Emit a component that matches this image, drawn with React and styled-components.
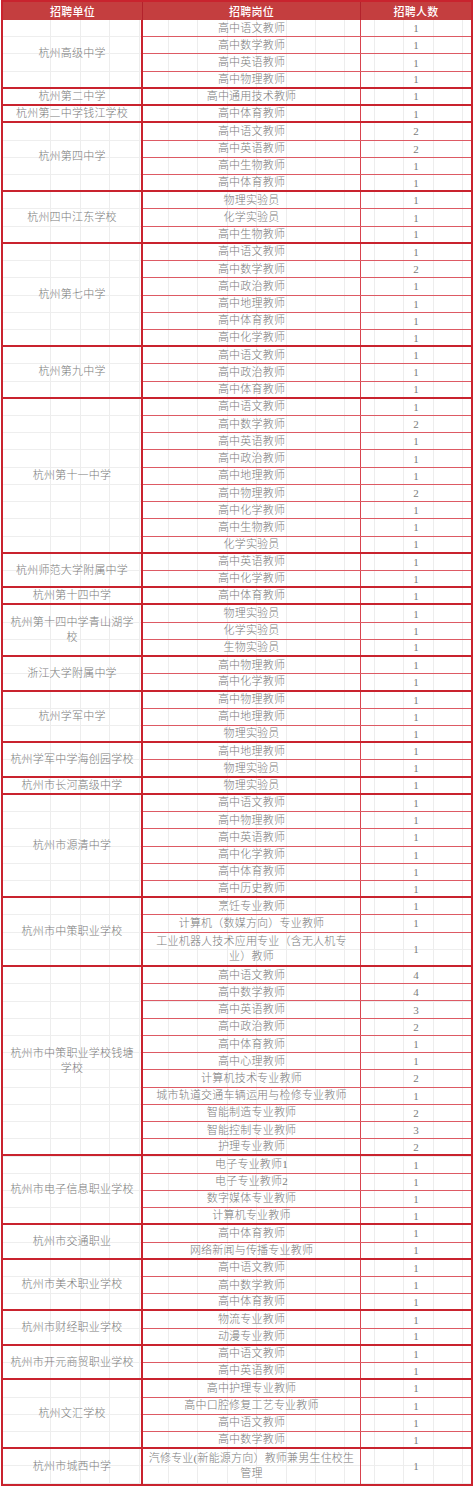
import React from "react";
import styled, { createGlobalStyle } from "styled-components";

const ROW = 17.22;

const GlobalStyle = createGlobalStyle`
  html, body {
    margin: 0;
    padding: 0;
    background: #ffffff;
  }
`;

const Table = styled.div`
  width: 472px;
  margin-left: 1px;
  box-sizing: border-box;
  border: 2px solid #c9232e;
  font-family: "Liberation Serif", "Noto Sans CJK SC", serif;
  font-size: 11px;
  font-weight: 300;
  color: #7c7c7c;
`;

const Header = styled.div`
  display: grid;
  grid-template-columns: 140px 218px 110px;
  height: 18px;
  background-color: #c43e3f;
  color: #ffffff;
  font-weight: 500;
`;

const HeadCell = styled.div`
  display: flex;
  align-items: center;
  justify-content: center;
  box-sizing: border-box;
  border-right: ${(p) => (p.$edge ? "none" : "1px solid #b3222c")};
  letter-spacing: 0.3px;
`;

const Body = styled.div`
  background-image: repeating-linear-gradient(
      to right,
      transparent 0 28.4px,
      #ededed 28.4px 29.4px
    ),
    repeating-linear-gradient(
      to bottom,
      transparent 0 ${ROW - 1}px,
      #eeeeee ${ROW - 1}px ${ROW}px
    );
  background-position: 19px 0, 0 0;
`;

const Group = styled.div`
  display: flex;
`;

const School = styled.div`
  width: 140px;
  flex-shrink: 0;
  box-sizing: border-box;
  display: flex;
  align-items: center;
  justify-content: center;
  text-align: center;
  padding: 0 4px;
  white-space: pre-line;
  line-height: 15px;
  letter-spacing: 0.2px;
  border-right: 2px solid #c9232e;
  border-bottom: ${(p) => (p.$last ? "none" : "2px solid #c9232e")};
`;

const Jobs = styled.div`
  flex: 1;
  display: flex;
  flex-direction: column;
`;

const JobRow = styled.div`
  display: grid;
  grid-template-columns: 218px 110px;
  box-sizing: border-box;
  height: ${(p) => p.$units * ROW}px;
  border-bottom: 1px solid #dd5a64;

  &:last-child {
    border-bottom: ${(p) => (p.$last ? "none" : "2px solid #c9232e")};
  }
`;

const JobCell = styled.div`
  display: flex;
  align-items: center;
  justify-content: center;
  text-align: center;
  white-space: pre-line;
  line-height: 15px;
  letter-spacing: 0.2px;
  border-right: 1px solid #d8434e;
`;

const CountCell = styled.div`
  display: flex;
  align-items: center;
  justify-content: center;
`;

const schools = [
  { name: "杭州高级中学", jobs: [["高中语文教师", 1], ["高中数学教师", 1], ["高中英语教师", 1], ["高中物理教师", 1]] },
  { name: "杭州第二中学", jobs: [["高中通用技术教师", 1]] },
  { name: "杭州第二中学钱江学校", jobs: [["高中体育教师", 1]] },
  { name: "杭州第四中学", jobs: [["高中语文教师", 2], ["高中英语教师", 2], ["高中生物教师", 1], ["高中体育教师", 1]] },
  { name: "杭州四中江东学校", jobs: [["物理实验员", 1], ["化学实验员", 1], ["高中生物教师", 1]] },
  {
    name: "杭州第七中学",
    jobs: [["高中语文教师", 1], ["高中数学教师", 2], ["高中政治教师", 1], ["高中地理教师", 1], ["高中体育教师", 1], ["高中化学教师", 1]],
  },
  { name: "杭州第九中学", jobs: [["高中语文教师", 1], ["高中政治教师", 1], ["高中体育教师", 1]] },
  {
    name: "杭州第十一中学",
    jobs: [
      ["高中语文教师", 1], ["高中数学教师", 2], ["高中英语教师", 1], ["高中政治教师", 1], ["高中地理教师", 1],
      ["高中物理教师", 2], ["高中化学教师", 1], ["高中生物教师", 1], ["化学实验员", 1],
    ],
  },
  { name: "杭州师范大学附属中学", jobs: [["高中英语教师", 1], ["高中化学教师", 1]] },
  { name: "杭州第十四中学", jobs: [["高中体育教师", 1]] },
  { name: "杭州第十四中学青山湖学\n校", jobs: [["物理实验员", 1], ["化学实验员", 1], ["生物实验员", 1]] },
  { name: "浙江大学附属中学", jobs: [["高中物理教师", 1], ["高中化学教师", 1]] },
  { name: "杭州学军中学", jobs: [["高中物理教师", 1], ["高中地理教师", 1], ["物理实验员", 1]] },
  { name: "杭州学军中学海创园学校", jobs: [["高中地理教师", 1], ["物理实验员", 1]] },
  { name: "杭州市长河高级中学", jobs: [["物理实验员", 1]] },
  {
    name: "杭州市源清中学",
    jobs: [["高中语文教师", 1], ["高中物理教师", 1], ["高中英语教师", 1], ["高中化学教师", 1], ["高中体育教师", 1], ["高中历史教师", 1]],
  },
  {
    name: "杭州市中策职业学校",
    jobs: [["烹饪专业教师", 1], ["计算机（数媒方向）专业教师", 1], ["工业机器人技术应用专业（含无人机专\n业）教师", 1, 2]],
  },
  {
    name: "杭州市中策职业学校钱塘\n学校",
    jobs: [
      ["高中语文教师", 4], ["高中数学教师", 4], ["高中英语教师", 3], ["高中政治教师", 2], ["高中体育教师", 1],
      ["高中心理教师", 1], ["计算机技术专业教师", 2], ["城市轨道交通车辆运用与检修专业教师", 1],
      ["智能制造专业教师", 2], ["智能控制专业教师", 3], ["护理专业教师", 2],
    ],
  },
  { name: "杭州市电子信息职业学校", jobs: [["电子专业教师1", 1], ["电子专业教师2", 1], ["数字媒体专业教师", 1], ["计算机专业教师", 1]] },
  { name: "杭州市交通职业", jobs: [["高中体育教师", 1], ["网络新闻与传播专业教师", 1]] },
  { name: "杭州市美术职业学校", jobs: [["高中语文教师", 1], ["高中数学教师", 1], ["高中体育教师", 1]] },
  { name: "杭州市财经职业学校", jobs: [["物流专业教师", 1], ["动漫专业教师", 1]] },
  { name: "杭州市开元商贸职业学校", jobs: [["高中语文教师", 1], ["高中英语教师", 1]] },
  { name: "杭州文汇学校", jobs: [["高中护理专业教师", 1], ["高中口腔修复工艺专业教师", 1], ["高中语文教师", 1], ["高中数学教师", 1]] },
  { name: "杭州市城西中学", jobs: [["汽修专业(新能源方向）教师兼男生住校生\n管理", 1, 2]] },
];

export default function App() {
  return (
    <>
      <GlobalStyle />
      <Table>
        <Header>
          <HeadCell>招聘单位</HeadCell>
          <HeadCell>招聘岗位</HeadCell>
          <HeadCell $edge>招聘人数</HeadCell>
        </Header>
        <Body>
          {schools.map((s, i) => {
            const last = i === schools.length - 1;
            return (
              <Group key={s.name}>
                <School $last={last}>{s.name}</School>
                <Jobs>
                  {s.jobs.map(([job, count, units = 1], j) => (
                    <JobRow key={j} $units={units} $last={last}>
                      <JobCell>{job}</JobCell>
                      <CountCell>{count}</CountCell>
                    </JobRow>
                  ))}
                </Jobs>
              </Group>
            );
          })}
        </Body>
      </Table>
    </>
  );
}
